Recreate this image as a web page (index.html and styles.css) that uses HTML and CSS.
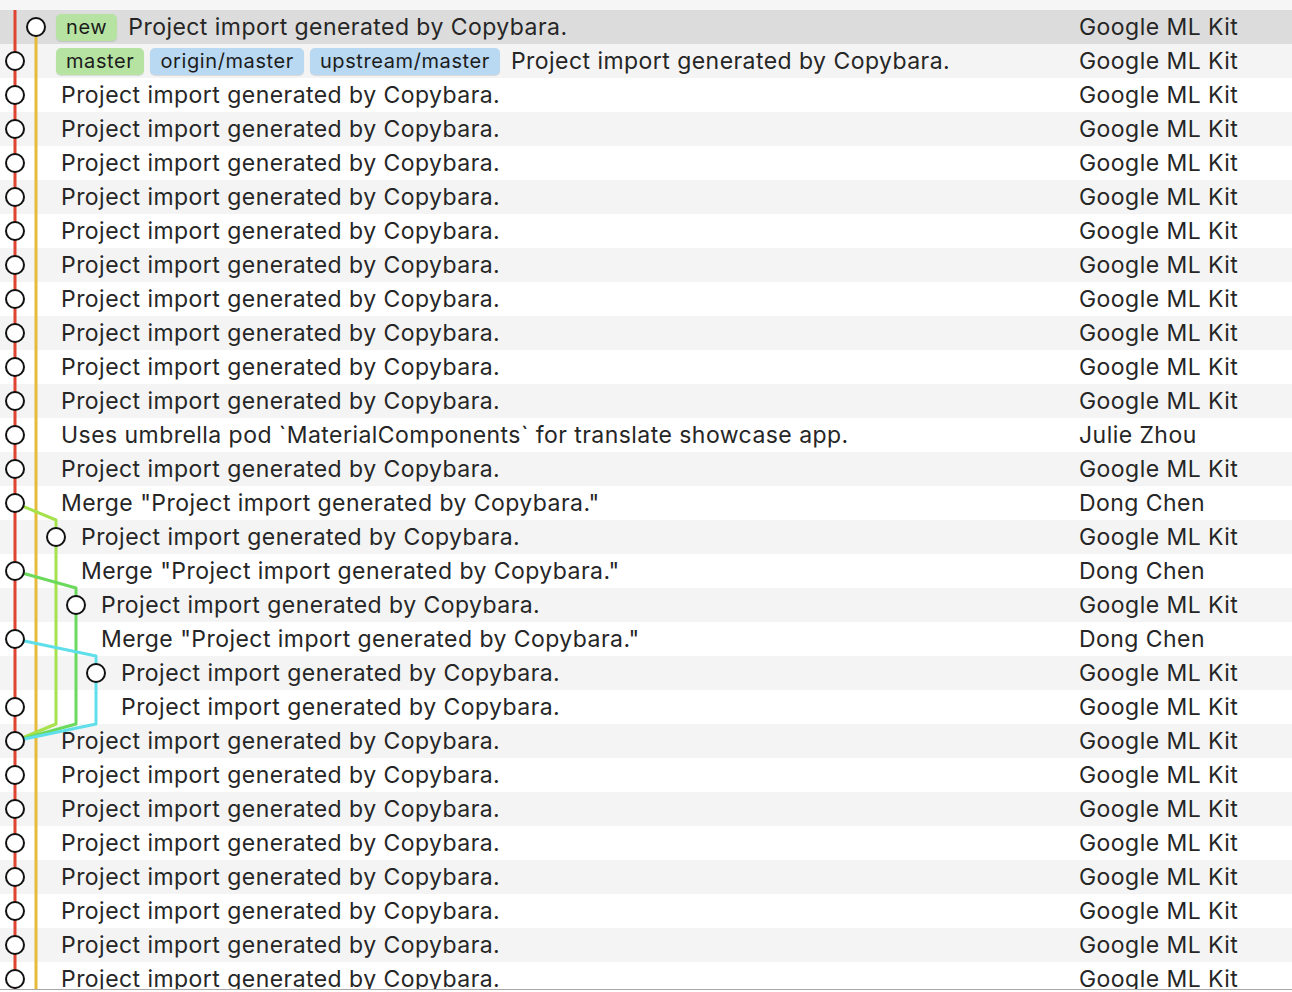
FILE: index.html
```html
<!DOCTYPE html>
<html>
<head>
<meta charset="utf-8">
<link rel="stylesheet" href="styles.css">
</head>
<body>
<div class="topstrip"></div>
<div class="list">
  <svg class="graph" width="120" height="980" viewBox="0 0 120 980">
    <line x1="15" y1="0" x2="15" y2="980" stroke="#e0432f" stroke-width="3"/>
    <line x1="36" y1="17" x2="36" y2="980" stroke="#e6ba3b" stroke-width="3"/>
    <polyline points="15,493 56,510 56,714 15,731" fill="none" stroke="#a5e24c" stroke-width="3" stroke-linejoin="round"/>
    <polyline points="15,561 76,578 76,714 15,731" fill="none" stroke="#6bd95c" stroke-width="3" stroke-linejoin="round"/>
    <polyline points="15,629 96,646 96,714 15,731" fill="none" stroke="#5edfe9" stroke-width="3" stroke-linejoin="round"/>
    <g fill="#fff" stroke="#111" stroke-width="2">
      <circle cx="36" cy="17" r="9"/>
      <circle cx="15" cy="51" r="9"/>
      <circle cx="15" cy="85" r="9"/>
      <circle cx="15" cy="119" r="9"/>
      <circle cx="15" cy="153" r="9"/>
      <circle cx="15" cy="187" r="9"/>
      <circle cx="15" cy="221" r="9"/>
      <circle cx="15" cy="255" r="9"/>
      <circle cx="15" cy="289" r="9"/>
      <circle cx="15" cy="323" r="9"/>
      <circle cx="15" cy="357" r="9"/>
      <circle cx="15" cy="391" r="9"/>
      <circle cx="15" cy="425" r="9"/>
      <circle cx="15" cy="459" r="9"/>
      <circle cx="15" cy="493" r="9"/>
      <circle cx="56" cy="527" r="9"/>
      <circle cx="15" cy="561" r="9"/>
      <circle cx="76" cy="595" r="9"/>
      <circle cx="15" cy="629" r="9"/>
      <circle cx="96" cy="663" r="9"/>
      <circle cx="15" cy="697" r="9"/>
      <circle cx="15" cy="731" r="9"/>
      <circle cx="15" cy="765" r="9"/>
      <circle cx="15" cy="799" r="9"/>
      <circle cx="15" cy="833" r="9"/>
      <circle cx="15" cy="867" r="9"/>
      <circle cx="15" cy="901" r="9"/>
      <circle cx="15" cy="935" r="9"/>
      <circle cx="15" cy="969" r="9"/>
    </g>
  </svg>

  <div class="row selected"><div class="msg ind1"><span class="badge green">new</span><span class="text">Project import generated by Copybara.</span></div><div class="author">Google ML Kit</div></div>
  <div class="row"><div class="msg ind1"><span class="badge green">master</span><span class="badge blue">origin/master</span><span class="badge blue">upstream/master</span><span class="text">Project import generated by Copybara.</span></div><div class="author">Google ML Kit</div></div>
  <div class="row"><div class="msg ind2">Project import generated by Copybara.</div><div class="author">Google ML Kit</div></div>
  <div class="row"><div class="msg ind2">Project import generated by Copybara.</div><div class="author">Google ML Kit</div></div>
  <div class="row"><div class="msg ind2">Project import generated by Copybara.</div><div class="author">Google ML Kit</div></div>
  <div class="row"><div class="msg ind2">Project import generated by Copybara.</div><div class="author">Google ML Kit</div></div>
  <div class="row"><div class="msg ind2">Project import generated by Copybara.</div><div class="author">Google ML Kit</div></div>
  <div class="row"><div class="msg ind2">Project import generated by Copybara.</div><div class="author">Google ML Kit</div></div>
  <div class="row"><div class="msg ind2">Project import generated by Copybara.</div><div class="author">Google ML Kit</div></div>
  <div class="row"><div class="msg ind2">Project import generated by Copybara.</div><div class="author">Google ML Kit</div></div>
  <div class="row"><div class="msg ind2">Project import generated by Copybara.</div><div class="author">Google ML Kit</div></div>
  <div class="row"><div class="msg ind2">Project import generated by Copybara.</div><div class="author">Google ML Kit</div></div>
  <div class="row"><div class="msg ind2">Uses umbrella pod `MaterialComponents` for translate showcase app.</div><div class="author">Julie Zhou</div></div>
  <div class="row"><div class="msg ind2">Project import generated by Copybara.</div><div class="author">Google ML Kit</div></div>
  <div class="row"><div class="msg ind2">Merge "Project import generated by Copybara."</div><div class="author">Dong Chen</div></div>
  <div class="row"><div class="msg ind3">Project import generated by Copybara.</div><div class="author">Google ML Kit</div></div>
  <div class="row"><div class="msg ind3">Merge "Project import generated by Copybara."</div><div class="author">Dong Chen</div></div>
  <div class="row"><div class="msg ind4">Project import generated by Copybara.</div><div class="author">Google ML Kit</div></div>
  <div class="row"><div class="msg ind4">Merge "Project import generated by Copybara."</div><div class="author">Dong Chen</div></div>
  <div class="row"><div class="msg ind5">Project import generated by Copybara.</div><div class="author">Google ML Kit</div></div>
  <div class="row"><div class="msg ind5">Project import generated by Copybara.</div><div class="author">Google ML Kit</div></div>
  <div class="row"><div class="msg ind2">Project import generated by Copybara.</div><div class="author">Google ML Kit</div></div>
  <div class="row"><div class="msg ind2">Project import generated by Copybara.</div><div class="author">Google ML Kit</div></div>
  <div class="row"><div class="msg ind2">Project import generated by Copybara.</div><div class="author">Google ML Kit</div></div>
  <div class="row"><div class="msg ind2">Project import generated by Copybara.</div><div class="author">Google ML Kit</div></div>
  <div class="row"><div class="msg ind2">Project import generated by Copybara.</div><div class="author">Google ML Kit</div></div>
  <div class="row"><div class="msg ind2">Project import generated by Copybara.</div><div class="author">Google ML Kit</div></div>
  <div class="row"><div class="msg ind2">Project import generated by Copybara.</div><div class="author">Google ML Kit</div></div>
  <div class="row"><div class="msg ind2">Project import generated by Copybara.</div><div class="author">Google ML Kit</div></div>
</div>
<div class="bottom"></div>
</body>
</html>
```

FILE: styles.css
```css
html, body {
  margin: 0;
  padding: 0;
  background: #ffffff;
}
body {
  width: 1292px;
  height: 992px;
  overflow: hidden;
  font-family: "Inter", "Noto Sans", sans-serif;
  font-size: 23px;
  letter-spacing: 0.45px;
  color: #262626;
}
.topstrip {
  height: 10px;
  background: #f6f6f6;
}
.list {
  position: relative;
  height: 979px;
  overflow: hidden;
  border-bottom: 1px solid #a8a8a8;
}
.graph {
  position: absolute;
  left: 0;
  top: 0;
  z-index: 2;
}
.row {
  display: flex;
  align-items: center;
  height: 34px;
  background: #ffffff;
}
.row:nth-child(odd) {
  background: #f4f4f4;
}
.row.selected {
  background: #dcdcdc;
}
.msg {
  flex: 1;
  display: flex;
  align-items: center;
  white-space: nowrap;
  position: relative;
  z-index: 1;
}
.ind1 { padding-left: 56px; }
.ind2 { padding-left: 61px; }
.ind3 { padding-left: 81px; }
.ind4 { padding-left: 101px; }
.ind5 { padding-left: 121px; }
.author {
  width: 213px;
  white-space: nowrap;
}
.badge {
  display: inline-flex;
  align-items: center;
  height: 27px;
  padding: 0 10px;
  margin-right: 6px;
  border-radius: 5px;
  font-size: 20px;
  letter-spacing: 0.6px;
  color: #1c1c1c;
  box-shadow: 0 1px 1px rgba(0, 0, 0, 0.12);
}
.badge.green { background: #b6e3a2; }
.badge.blue { background: #b9d8f1; }
.text { margin-left: 5px; }
.bottom {
  height: 2px;
  background: #ffffff;
}
```
